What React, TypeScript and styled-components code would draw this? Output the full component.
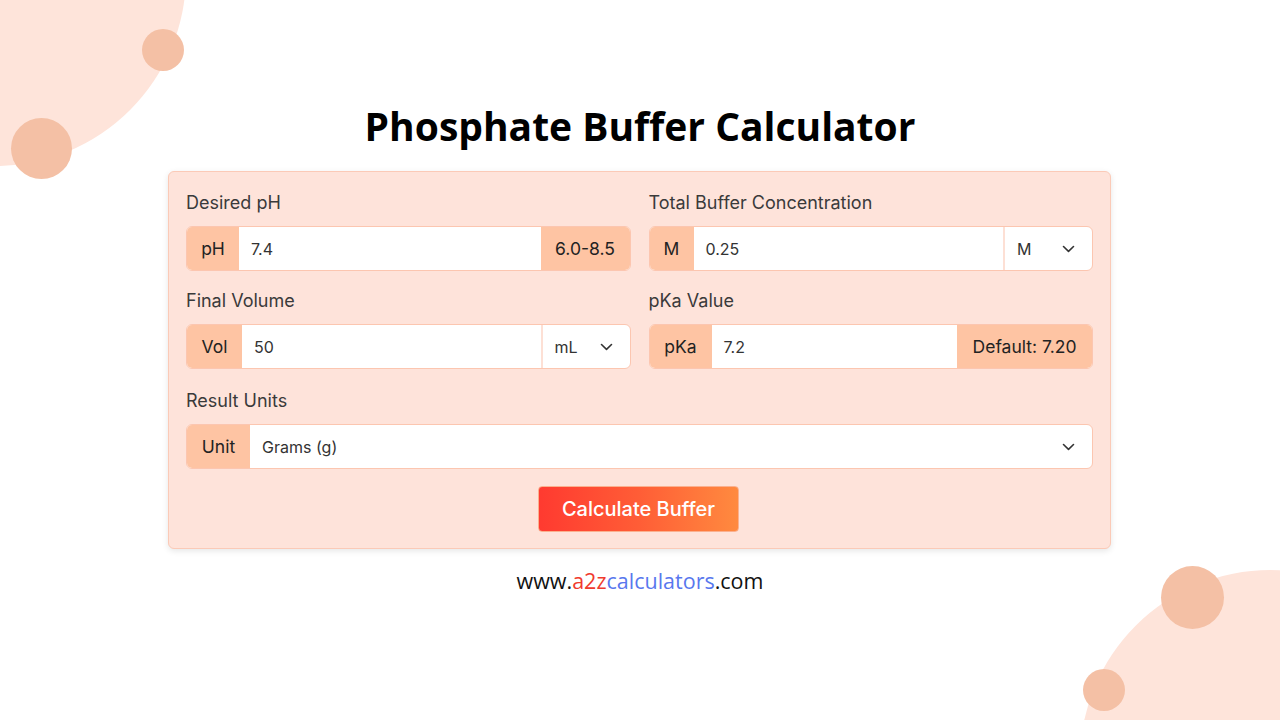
import styled, { createGlobalStyle } from 'styled-components';

const GlobalStyle = createGlobalStyle`
  html, body {
    margin: 0;
    padding: 0;
    background: #ffffff;
  }
  body {
    font-family: Inter, "Noto Sans", "Liberation Sans", sans-serif;
  }
`;

const Page = styled.div`
  position: relative;
  width: 1280px;
  height: 720px;
  overflow: hidden;
  background: #fff;
  display: flex;
  flex-direction: column;
  align-items: center;
`;

const Blob = styled.div<{ $x: number; $y: number; $r: number; $dark?: boolean }>`
  position: absolute;
  left: ${(p) => p.$x - p.$r}px;
  top: ${(p) => p.$y - p.$r}px;
  width: ${(p) => p.$r * 2}px;
  height: ${(p) => p.$r * 2}px;
  border-radius: 50%;
  background: ${(p) => (p.$dark ? '#f4c0a5' : '#fee4da')};
`;

const Title = styled.h1`
  position: relative;
  margin: 102px 0 0;
  font-family: "Open Sans", "Liberation Sans", sans-serif;
  font-weight: 700;
  font-size: 39px;
  line-height: 48px;
  color: #000;
`;

const Card = styled.div`
  position: relative;
  margin-top: 21px;
  margin-right: 1px;
  width: 943px;
  box-sizing: border-box;
  padding: 18px 17px 16px;
  background: #fee3da;
  border: 1px solid #fbcab7;
  border-radius: 6px;
  box-shadow: 0 2px 6px rgba(0, 0, 0, 0.1);
`;

const Grid = styled.div`
  display: grid;
  grid-template-columns: 1fr 1fr;
  column-gap: 18px;
  row-gap: 17px;
`;

const Field = styled.div<{ $wide?: boolean }>`
  display: flex;
  flex-direction: column;
  gap: 10px;
  grid-column: ${(p) => (p.$wide ? '1 / span 2' : 'auto')};
  margin-top: ${(p) => (p.$wide ? '2px' : '0')};
`;

const Label = styled.div`
  font-size: 18px;
  line-height: 26px;
  color: #3a3a3a;
`;

const Group = styled.div`
  display: flex;
  height: 45px;
  border: 1px solid #fcc6b0;
  border-radius: 6px;
  overflow: hidden;
  background: #fff;
  box-sizing: border-box;
`;

const Addon = styled.div<{ $w: number }>`
  flex: 0 0 ${(p) => p.$w}px;
  display: flex;
  align-items: center;
  justify-content: center;
  background: #fec4a3;
  color: #222;
  font-size: 17.5px;
`;

const Value = styled.div`
  flex: 1;
  display: flex;
  align-items: center;
  padding-left: 12px;
  font-size: 16px;
  color: #333;
`;

const Select = styled.div<{ $w?: number }>`
  flex: 0 0 ${(p) => (p.$w ? `${p.$w}px` : 'auto')};
  display: flex;
  align-items: center;
  justify-content: space-between;
  padding: 0 17px 0 12px;
  box-sizing: border-box;
  border-left: ${(p) => (p.$w ? '2px solid #fde0d5' : 'none')};
  font-size: 16px;
  color: #333;
`;

const ButtonRow = styled.div`
  display: flex;
  justify-content: center;
  margin-top: 17px;
`;

const Button = styled.button`
  width: 201px;
  height: 46px;
  margin-left: -2px;
  border: 1px solid #fbb08e;
  border-radius: 4px;
  background: linear-gradient(90deg, #ff3a30 0%, #ff5d36 50%, #ff8a3f 100%);
  color: #fff;
  font-family: Inter, "Noto Sans", sans-serif;
  font-size: 20px;
  font-weight: 500;
  cursor: pointer;
`;

const Footer = styled.div`
  position: relative;
  margin-top: 17px;
  font-family: "Open Sans", "Liberation Sans", sans-serif;
  font-size: 21.5px;
  line-height: 30px;
  color: #111;
`;

const Red = styled.span`
  color: #f03a2e;
`;

const Blue = styled.span`
  color: #5877ee;
`;

const Chevron = () => (
  <svg width="13" height="8" viewBox="0 0 13 8" fill="none">
    <path d="M1.5 1.5 L6.5 6.3 L11.5 1.5" stroke="#333" strokeWidth="1.6" strokeLinecap="round" strokeLinejoin="round" />
  </svg>
);

export default function App() {
  return (
    <Page>
      <GlobalStyle />
      <Blob $x={-5} $y={-25} $r={191} />
      <Blob $x={163} $y={50} $r={21} $dark />
      <Blob $x={41.5} $y={148.5} $r={30.5} $dark />
      <Blob $x={1270} $y={760} $r={190} />
      <Blob $x={1192.5} $y={597.5} $r={31.5} $dark />
      <Blob $x={1104} $y={689.5} $r={21} $dark />

      <Title>Phosphate Buffer Calculator</Title>

      <Card>
        <Grid>
          <Field>
            <Label>Desired pH</Label>
            <Group>
              <Addon $w={52}>pH</Addon>
              <Value>7.4</Value>
              <Addon $w={89}>6.0-8.5</Addon>
            </Group>
          </Field>
          <Field>
            <Label>Total Buffer Concentration</Label>
            <Group>
              <Addon $w={44}>M</Addon>
              <Value>0.25</Value>
              <Select $w={89}>
                M <Chevron />
              </Select>
            </Group>
          </Field>
          <Field>
            <Label>Final Volume</Label>
            <Group>
              <Addon $w={55}>Vol</Addon>
              <Value>50</Value>
              <Select $w={89}>
                mL <Chevron />
              </Select>
            </Group>
          </Field>
          <Field>
            <Label>pKa Value</Label>
            <Group>
              <Addon $w={62}>pKa</Addon>
              <Value>7.2</Value>
              <Addon $w={135}>Default: 7.20</Addon>
            </Group>
          </Field>
          <Field $wide>
            <Label>Result Units</Label>
            <Group>
              <Addon $w={63}>Unit</Addon>
              <Value>Grams (g)</Value>
              <Select>
                <Chevron />
              </Select>
            </Group>
          </Field>
        </Grid>
        <ButtonRow>
          <Button>Calculate Buffer</Button>
        </ButtonRow>
      </Card>

      <Footer>
        www.<Red>a2z</Red>
        <Blue>calculators</Blue>.com
      </Footer>
    </Page>
  );
}
